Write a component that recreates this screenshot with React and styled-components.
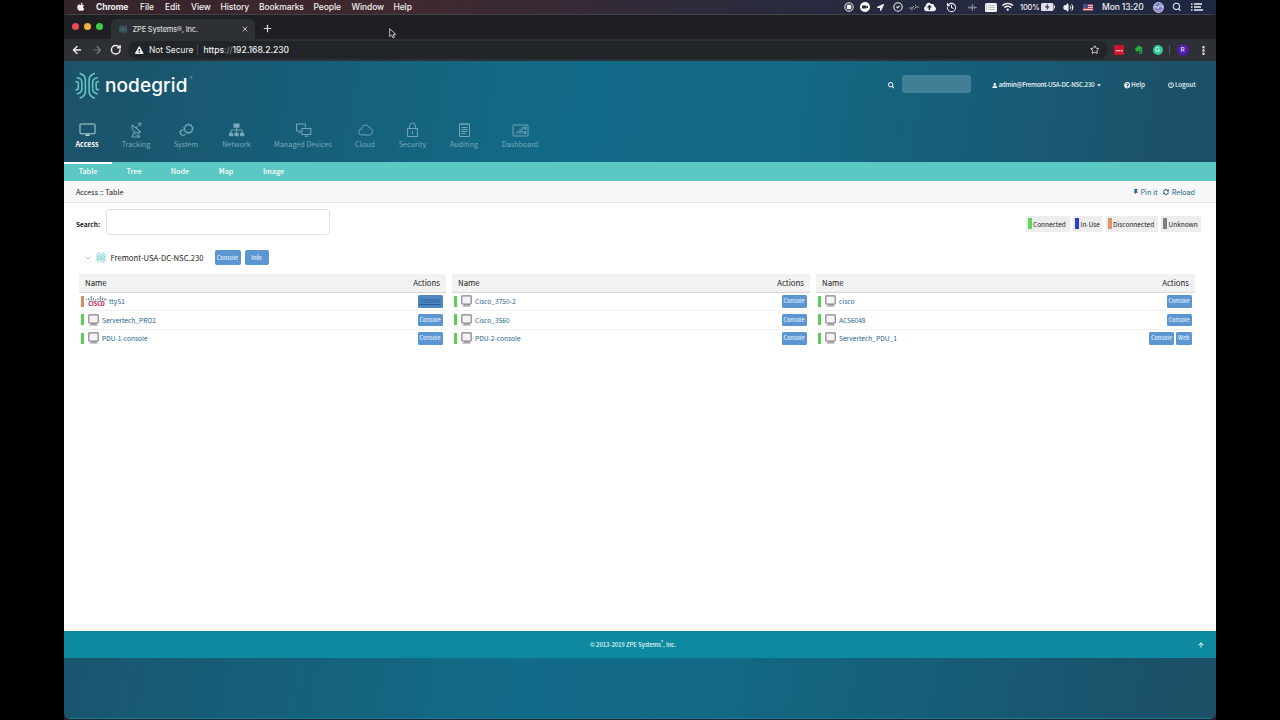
import React from "react";
import styled, { createGlobalStyle } from "styled-components";
import {
  FaApple,
  FaWifi,
  FaSearch,
  FaUser,
  FaQuestionCircle,
  FaPowerOff,
  FaCaretDown,
  FaArrowUp,
  FaThumbtack,
  FaSyncAlt,
  FaCloudUploadAlt,
  FaLocationArrow,
  FaEvernote,
  FaExclamationTriangle,
} from "react-icons/fa";
import {
  ArrowLeft,
  ArrowRight,
  RotateCw,
  X,
  Plus,
  Star,
  EllipsisVertical,
  Volume2,
  CircleCheck,
  History,
  Search,
  ChevronDown,
} from "lucide-react";

const menus = [
  ["File", 25],
  ["Edit", 26],
  ["View", 29.5],
  ["History", 38.5],
  ["Bookmarks", 54.5],
  ["People", 38],
  ["Window", 42],
  ["Help", 30],
];

const navItems = [
  ["Access", 46],
  ["Tracking", 52],
  ["System", 48],
  ["Network", 53],
  ["Managed Devices", 80],
  ["Cloud", 44],
  ["Security", 51],
  ["Auditing", 52],
  ["Dashboard", 60],
];

const subItems = [
  ["Table", 48],
  ["Tree", 44],
  ["Node", 48],
  ["Map", 44],
  ["Image", 51],
];

const legend = [
  ["Connected", "#5fd35a", 44],
  ["In-Use", "#2c3fd0", 29],
  ["Disconnected", "#dc9468", 52],
  ["Unknown", "#808080", 40],
];

const columns = [
  {
    width: 367,
    rows: [
      { name: "ttyS1", cisco: true, off: true, actions: ["Console"], pressed: true },
      { name: "Servertech_PRO2", actions: ["Console"] },
      { name: "PDU-1-console", actions: ["Console"] },
    ],
  },
  {
    width: 358,
    rows: [
      { name: "Cisco_3750-2", actions: ["Console"] },
      { name: "Cisco_3560", actions: ["Console"] },
      { name: "PDU-2-console", actions: ["Console"] },
    ],
  },
  {
    width: 379,
    rows: [
      { name: "cisco", actions: ["Console"] },
      { name: "ACS6048", actions: ["Console"] },
      { name: "Servertech_PDU_1", actions: ["Console", "Web"] },
    ],
  },
];

const NodegridMark = ({ size, color = "#62c6c6", weight = 1.6 }) => (
  <svg
    width={size}
    height={(size * 28) / 25}
    viewBox="0 0 25 28"
    fill="none"
    stroke={color}
    strokeWidth={weight}
    strokeLinecap="round"
    strokeLinejoin="round"
  >
    <path d="M1 10h1.200q1.200 0 1.200 1.200v5.600q0 1.200-1.200 1.200H1" />
    <path d="M2.300 5.800q4.700.8 4.700 5v6.400q0 4.200-4.700 5" />
    <path d="M5.300 1.500l2.500 1.300q2.800 1.800 2.800 5.200v12q0 3.400-2.800 5.200l-2.500 1.300" />
    <path d="M24 10h-1.200q-1.200 0-1.200 1.200v5.600q0 1.200 1.200 1.200H24" />
    <path d="M22.700 5.800q-4.700.8-4.700 5v6.400q0 4.200 4.700 5" />
    <path d="M19.700 1.500l-2.500 1.300q-2.800 1.800-2.800 5.200v12q0 3.400 2.800 5.200l2.500 1.300" />
  </svg>
);

const navDrawings = {
  Access: (
    <>
      <rect x="1" y="2" width="15" height="9.800" rx="0.800" />
      <path d="M6.500 13.200h4" strokeWidth="1.600" />
    </>
  ),
  Tracking: (
    <>
      <path d="M4 3c-1 5 3 9 9 7zM4 3l9 7M8 6l4-4M10 1.500l3-.5-.5 3" />
      <path d="M6 10l-2 5h8l-2-4M6 11l5 4" />
    </>
  ),
  System: (
    <>
      <circle cx="10.500" cy="6.800" r="3.900" strokeWidth="1.200" />
      <circle cx="10.500" cy="6.800" r="4.900" strokeDasharray="1.500 1.580" />
      <path d="M5.400 7.800a2.700 2.700 0 1 0 1.900 4.200" strokeWidth="1.200" />
      <path d="M4 7.200V8M1.200 9.500l.8.400M1.800 13l.6-.7M5 14.200v-.8" />
    </>
  ),
  Network: (
    <g fill="currentColor">
      <rect x="5.500" y="1.500" width="6" height="4.200" stroke="none" />
      <rect x="1" y="10.800" width="4.200" height="3.400" stroke="none" />
      <rect x="6.500" y="10.800" width="4.200" height="3.400" stroke="none" />
      <rect x="12" y="10.800" width="4.200" height="3.400" stroke="none" />
      <path fill="none" d="M8.600 5v6M3 11V8h11.200v3" />
    </g>
  ),
  "Managed Devices": (
    <>
      <path d="M6 9H1.500V2h8.800v3.500M3.500 10.800h2.300" />
      <rect x="7" y="6.500" width="8.800" height="6" />
      <path d="M9.500 14.200h3.800" />
    </>
  ),
  Cloud: <path d="M5 13a3 3 0 0 1-.5-6c.3-5 7-5 7.700-1.200 4.500.2 4.300 7.200 0 7.200z" />,
  Security: (
    <>
      <rect x="3.600" y="6.500" width="9.800" height="8" />
      <path d="M5.600 6.500V4a2.900 2.900 0 0 1 5.800 0v2.500M8.500 9.300v3M7.700 9.500h.8" />
    </>
  ),
  Auditing: (
    <>
      <rect x="3.500" y="2" width="10" height="12.500" rx="0.500" />
      <path d="M5 1v2M7.300 1v2M9.700 1v2M12 1v2M5.500 5.500h6M5.500 7.500h6M5.500 9.500h6M5.500 11.500h4" />
    </>
  ),
  Dashboard: (
    <>
      <rect x="1" y="3" width="15" height="11" rx="0.800" />
      <path d="M4 11.500V10M6 11.500V8.500M8 11.500V7M10 11.500V5M12 5h2v2h-2zM12 9.500h2v2h-2z" />
    </>
  ),
};

const NavIcon = ({ name }) => (
  <svg width="17" height="16" viewBox="0 0 17 16" fill="none" stroke="currentColor" strokeWidth="0.950">
    {navDrawings[name]}
  </svg>
);

const DeviceIcon = () => (
  <svg width="11" height="12" viewBox="0 0 11 12" fill="none">
    <rect x="0.800" y="0.800" width="9.400" height="8.200" rx="0.500" fill="#f4f4f6" stroke="#85838a" strokeWidth="1.200" />
    <path d="M2.500 10h6.500" stroke="#77757b" strokeWidth="1.200" />
    <path d="M1.200 11.300h8.600" stroke="#a9a7ac" strokeWidth="0.800" />
  </svg>
);

const CiscoLogo = () => (
  <CiscoBox>
    <svg width="21" height="5" viewBox="0 0 21 5" stroke="#4d7189" strokeWidth="0.900">
      <path d="M.5 3v1M2.800 2v2.500M5.100 0v5M7.400 2v2.500M9.700 3v1.500M12 2v2.500M14.300 0v5M16.600 1.500v3M18.800 2.500v2M20.600 3v1" />
    </svg>
    <CiscoName>CISCO</CiscoName>
  </CiscoBox>
);

const MenuBar = () => (
  <MacBar>
    <AppleSlot>
      <FaApple size={9.5} />
    </AppleSlot>
    <MenuLabel $w={44} $bold>
      Chrome
    </MenuLabel>
    {menus.map(([label, w]) => (
      <MenuLabel key={label} $w={w}>
        {label}
      </MenuLabel>
    ))}
    <Tray>
      <TraySlot $w={16}>
        <svg width="10" height="10" viewBox="0 0 10 10" fill="none" stroke="currentColor">
          <circle cx="5" cy="5" r="4.200" />
          <rect x="2.700" y="2.700" width="4.600" height="4.600" rx="1.200" fill="currentColor" stroke="none" />
        </svg>
      </TraySlot>
      <TraySlot $w={16}>
        <svg width="10" height="10" viewBox="0 0 10 10">
          <circle cx="5" cy="5" r="5" fill="#fff" />
          <path d="M2 3.500h4.200v1l1.800-.8v2.600l-1.800-.8v1H2z" fill="#28293b" />
        </svg>
      </TraySlot>
      <TraySlot $w={14}>
        <FaLocationArrow size={7} />
      </TraySlot>
      <TraySlot $w={22}>
        <CircleCheck size={10} strokeWidth={2.600} />
      </TraySlot>
      <TraySlot $w={10} $dim>
        <svg width="10" height="7" viewBox="0 0 10 7" fill="none" stroke="currentColor">
          <path d="M0 4h3l2-2M5 5l2-2h3M2 6l2-1M7 1L6 2" />
        </svg>
      </TraySlot>
      <TraySlot $w={22}>
        <FaCloudUploadAlt size={12} />
      </TraySlot>
      <TraySlot $w={20}>
        <History size={11} strokeWidth={2.200} />
      </TraySlot>
      <TraySlot $w={22} $dim>
        <svg width="9" height="9" viewBox="0 0 9 9" stroke="#b8bbcc" strokeWidth="1.200">
          <path d="M1 3.500v2M3.200 3v3M4.500 1v7M6.500 3v3M0 4.500h9" />
        </svg>
      </TraySlot>
      <TraySlot $w={15}>
        <svg width="12" height="9" viewBox="0 0 12 9">
          <rect width="12" height="9" rx="1.500" fill="#f2f2f5" />
          <path d="M1.500 2v5M3.500 2.500h6.500M3.500 4.500h6.500M3.500 6.500h6.500" stroke="#8a8b97" strokeWidth="0.500" />
        </svg>
      </TraySlot>
      <TraySlot $w={20}>
        <FaWifi size={11.5} />
      </TraySlot>
      <Percent>100%</Percent>
      <TraySlot $w={16}>
        <svg width="14" height="8" viewBox="0 0 14 8">
          <rect width="12.500" height="8" rx="1.500" fill="#dfe0e6" />
          <rect x="13" y="2.500" width="1" height="3" fill="#dfe0e6" />
          <path d="M7 0.500L4 4.500h2.200L5.500 7.500l3-4H6.400z" fill="#27293b" />
        </svg>
      </TraySlot>
      <TraySlot $w={24}>
        <Volume2 size={11} fill="currentColor" strokeWidth={2} />
      </TraySlot>
      <TraySlot $w={16}>
        <svg width="10" height="7" viewBox="0 0 10 7">
          <rect width="10" height="7" fill="#d9c4cc" />
          <path d="M0 .5h10M0 2.500h10M0 4.500h10M0 6.500h10" stroke="#bd4a5c" />
          <rect width="5" height="4" fill="#465184" />
        </svg>
      </TraySlot>
      <Clock>Mon 13:20</Clock>
      <TraySlot $w={18}>
        <svg width="11" height="11" viewBox="0 0 11 11">
          <circle cx="5.500" cy="5.500" r="5" fill="#7d83c9" stroke="#c8cbe0" />
          <path d="M1.500 5.500c2-4 3 3 4 0s3-2 4 0" stroke="#fff" fill="none" />
          <path d="M3 8c2 1.500 4 1 5-.5" stroke="#e886bd" fill="none" />
        </svg>
      </TraySlot>
      <TraySlot $w={20}>
        <Search size={9.5} strokeWidth={2.600} />
      </TraySlot>
      <TraySlot $w={20}>
        <svg width="12" height="8" viewBox="0 0 12 8" stroke="currentColor" strokeWidth="1.300">
          <path d="M0 1h1.500M3 1h8M0 4h1.500M3 4h7M0 7h1.500M3 7h9" />
        </svg>
      </TraySlot>
    </Tray>
  </MacBar>
);

const Browser = () => (
  <>
    <TabStrip>
      <Lights>
        <Light $color="#ee4b50" />
        <Light $color="#f3b13e" />
        <Light $color="#3ccb4e" />
      </Lights>
      <Tab>
        <NodegridMark size={8} color="#4d8f92" weight={2} />
        <TabTitle>ZPE Systems®, Inc.</TabTitle>
        <X size={8} strokeWidth={2.500} />
      </Tab>
      <NewTab>
        <Plus size={11} strokeWidth={2.600} />
      </NewTab>
    </TabStrip>
    <AddressBar>
      <ArrowLeft size={12} strokeWidth={2.700} />
      <ArrowRight size={12} strokeWidth={2.400} color="#777a7e" />
      <RotateCw size={11.5} strokeWidth={3} />
      <UrlField>
        <FaExclamationTriangle size={8.5} />
        <NotSecure>Not Secure</NotSecure>
        <Url>
          <b>https</b>
          <span>://</span>
          <b>192.168.2.230</b>
        </Url>
        <Star size={9.5} strokeWidth={2.200} />
      </UrlField>
      <Extensions>
        <RedBadge>•••</RedBadge>
        <FaEvernote size={9.5} color="#23ad3f" />
        <RoundBadge $color="#2ec99b">G</RoundBadge>
        <ExtDivider />
        <RoundBadge $color="#4b1fa6" $big>
          R
        </RoundBadge>
        <EllipsisVertical size={11} strokeWidth={3.400} />
      </Extensions>
    </AddressBar>
  </>
);

const AppHeader = () => (
  <HeaderArea>
    <BrandRow>
      <NodegridMark size={24.5} />
      <Wordmark>nodegrid</Wordmark>
      <Registered>®</Registered>
      <HeaderTools>
        <FaSearch size={6.5} />
        <HeaderSearch />
        <Tool $w={131.5}>
          <FaUser size={5.500} />
          <ToolText $gap={1} $squeeze={-0.32}>
            admin@Fremont-USA-DC-NSC.230
          </ToolText>
          <FaCaretDown size={6} />
        </Tool>
        <Tool $w={44.5}>
          <FaQuestionCircle size={6.5} />
          <ToolText $gap={1} $squeeze={-0.1}>
            Help
          </ToolText>
        </Tool>
        <Tool $w={27}>
          <FaPowerOff size={6} />
          <ToolText $gap={1} $squeeze={-0.15}>
            Logout
          </ToolText>
        </Tool>
      </HeaderTools>
    </BrandRow>
    <MainNav>
      {navItems.map(([label, w], i) => (
        <NavItem key={label} $w={w} $active={i === 0}>
          <NavIcon name={label} />
          <NavText>{label}</NavText>
        </NavItem>
      ))}
    </MainNav>
  </HeaderArea>
);

const DeviceTable = ({ width, rows }) => (
  <Table $w={width}>
    <TableHead>
      <span>Name</span>
      <span>Actions</span>
    </TableHead>
    {rows.map((row) => (
      <Row key={row.name}>
        <Status $color={row.off ? "#d38d62" : "#57cf54"} />
        {row.cisco ? <CiscoLogo /> : <DeviceIcon />}
        <DeviceName>{row.name}</DeviceName>
        <Actions>
          {row.actions.map((action) => (
            <ActionButton key={action} $w={action === "Web" ? 15.5 : 25} $pressed={row.pressed}>
              {action}
            </ActionButton>
          ))}
        </Actions>
      </Row>
    ))}
  </Table>
);

const App = () => (
  <>
    <GlobalStyle />
    <Stage>
      <Screen>
        <MenuBar />
        <Window>
          <Browser />
          <Page>
            <AppHeader />
            <SubNav>
              {subItems.map(([label, w], i) => (
                <SubItem key={label} $w={w} $active={i === 0}>
                  {label}
                </SubItem>
              ))}
            </SubNav>
            <Breadcrumb>
              <span>Access :: Table</span>
              <PageLinks>
                <FaThumbtack size={5.500} />
                <span>Pin it</span>
                <FaSyncAlt size={6} />
                <span>Reload</span>
              </PageLinks>
            </Breadcrumb>
            <Content>
              <FilterRow>
                <SearchLabel>Search:</SearchLabel>
                <SearchInput />
                <Legend>
                  {legend.map(([label, color, w]) => (
                    <LegendItem key={label} $w={w} $color={color}>
                      {label}
                    </LegendItem>
                  ))}
                </Legend>
              </FilterRow>
              <HostRow>
                <ChevronDown size={8} color="#999" strokeWidth={2} />
                <NodegridMark size={10} color="#5cc3c2" weight={1.9} />
                <HostName>Fremont-USA-DC-NSC.230</HostName>
                <HostButton $w={26}>Console</HostButton>
                <HostButton $w={24}>Info</HostButton>
              </HostRow>
              <Tables>
                {columns.map((col) => (
                  <DeviceTable key={col.width} {...col} />
                ))}
              </Tables>
            </Content>
            <Footer>
              <Copyright>
                © 2013-2019 ZPE Systems<sup>®</sup>, Inc.
              </Copyright>
              <FaArrowUp size={6} />
            </Footer>
          </Page>
        </Window>
      </Screen>
      <Pointer width="8" height="11" viewBox="0 0 8 11">
        <path d="M.7 .7v8l2-1.800 1.300 3 1.500-.7-1.300-2.800h2.600z" fill="#17181c" stroke="#d8d8da" strokeWidth="0.900" />
      </Pointer>
    </Stage>
  </>
);

export default App;

const GlobalStyle = createGlobalStyle`
  * {
    box-sizing: border-box;
  }
  body {
    margin: 0;
    background: #000;
  }
  svg {
    display: block;
    flex: none;
  }
`;

const Stage = styled.div`
  position: relative;
  width: 1280px;
  height: 720px;
  padding: 0 64px;
  background: #000;
  overflow: hidden;
`;

const Screen = styled.div`
  width: 1152px;
  height: 720px;
  background: #262430;
  font-family: Inter, "Liberation Sans", sans-serif;
`;

const Pointer = styled.svg`
  position: absolute;
  left: 389px;
  top: 28px;
`;

const MacBar = styled.div`
  display: flex;
  align-items: center;
  height: 14px;
  background: linear-gradient(90deg, #34242a, #40292f 30%, #292b3e 62%, #1e2743);
  color: #f1f0f3;
`;

const AppleSlot = styled.div`
  width: 32px;
  padding: 0 0 1px 12px;
`;

const MenuLabel = styled.span`
  width: ${({ $w }) => $w}px;
  font-size: 8.500px;
  line-height: 13px;
  font-weight: ${({ $bold }) => ($bold ? 700 : 500)};
  letter-spacing: -0.1px;
  white-space: nowrap;
`;

const Tray = styled.div`
  display: flex;
  align-items: center;
  margin-left: auto;
  margin-right: 9px;
`;

const TraySlot = styled.div`
  display: flex;
  flex: none;
  justify-content: center;
  width: ${({ $w }) => $w}px;
  opacity: ${({ $dim }) => ($dim ? 0.6 : 1)};
`;

const Percent = styled.span`
  width: 22px;
  padding-left: 2px;
  font-size: 7.500px;
  font-weight: 500;
  letter-spacing: -0.2px;
`;

const Clock = styled.span`
  width: 53px;
  padding-left: 6px;
  font-size: 8.500px;
  font-weight: 500;
  letter-spacing: -0.1px;
  white-space: nowrap;
`;

const Window = styled.div`
  display: flex;
  flex-direction: column;
  height: 705px;
  border-radius: 4px 4px 6px 6px;
  overflow: hidden;
`;

const TabStrip = styled.div`
  display: flex;
  align-items: flex-end;
  height: 25px;
  background: #1d1f23;
  border-top: 1px solid #42434a;
`;

const Lights = styled.div`
  display: flex;
  gap: 5px;
  width: 47px;
  padding-left: 8px;
  padding-bottom: 9px;
`;

const Light = styled.i`
  width: 7px;
  height: 7px;
  border-radius: 50%;
  background: ${({ $color }) => $color};
`;

const Tab = styled.div`
  display: flex;
  align-items: center;
  width: 144px;
  height: 20px;
  padding: 0 6px 0 8px;
  border-radius: 5px 5px 0 0;
  background: #2d3035;
  color: #d9dadc;
`;

const TabTitle = styled.span`
  flex: 1;
  margin-left: 5.500px;
  font-size: 7.400px;
  font-weight: 500;
  letter-spacing: -0.15px;
`;

const NewTab = styled.div`
  padding: 0 0 5px 7px;
  color: #dcdde0;
`;

const AddressBar = styled.div`
  display: flex;
  align-items: center;
  gap: 7.500px;
  height: 22px;
  padding: 0 7px;
  background: #2d3035;
  color: #f0f0f2;
`;

const UrlField = styled.div`
  display: flex;
  flex: 1;
  align-items: center;
  height: 18px;
  margin-left: -1px;
  padding: 0 8px 0 7px;
  border-radius: 9px;
  background: #212428;
`;

const NotSecure = styled.span`
  width: 48.500px;
  margin-left: 5.500px;
  border-right: 1px solid #45484c;
  font-size: 8.400px;
  line-height: 10px;
  white-space: nowrap;
`;

const Url = styled.span`
  flex: 1;
  margin-left: 6px;
  font-size: 8.500px;

  b {
    font-weight: 500;
  }
  span {
    color: #9a9da1;
  }
`;

const Extensions = styled.div`
  display: flex;
  align-items: center;
  gap: 9.500px;
  margin-left: -1px;
`;

const RedBadge = styled.span`
  width: 10px;
  height: 10px;
  border-radius: 1px;
  background: #c9162b;
  color: #fff;
  font-size: 5px;
  line-height: 10px;
  text-align: center;
  letter-spacing: -0.5px;
`;

const RoundBadge = styled.span`
  width: ${({ $big }) => ($big ? 12 : 10)}px;
  height: ${({ $big }) => ($big ? 12 : 10)}px;
  border-radius: 50%;
  background: ${({ $color }) => $color};
  color: #fff;
  font-size: 6.500px;
  line-height: ${({ $big }) => ($big ? 12 : 10)}px;
  text-align: center;
`;

const ExtDivider = styled.span`
  width: 1px;
  height: 10px;
  margin: 0 -3px;
  background: #54575b;
`;

const Page = styled.div`
  display: flex;
  flex: 1;
  flex-direction: column;
  background: linear-gradient(100deg, #1b5067 0%, #126b88 44%, #126a87 58%, #1b5067 97%);
  border-bottom: 1px solid #147a95;
  font-family: "Noto Sans CJK SC", "Noto Sans", sans-serif;
`;

const HeaderArea = styled.header`
  height: 101px;
  background: linear-gradient(100deg, #1b5269 0%, #126b88 44%, #126a87 60%, #1c5068 97%);
`;

const BrandRow = styled.div`
  display: flex;
  align-items: center;
  height: 49px;
  padding: 1px 21px 0 11px;
`;

const Wordmark = styled.span`
  margin: -1px 0 0 5.500px;
  color: #fff;
  font-family: Inter, sans-serif;
  font-size: 19px;
  font-weight: 500;
  line-height: 24px;
  letter-spacing: 0.1px;
`;

const Registered = styled.span`
  margin: -16px 0 0 2px;
  color: #84b1c1;
  font-size: 6.500px;
  line-height: 8px;
`;

const HeaderTools = styled.div`
  display: flex;
  align-items: center;
  margin-left: auto;
  padding-bottom: 1.500px;
  color: #e9f3f6;
`;

const HeaderSearch = styled.div`
  width: 69px;
  height: 18px;
  margin: -2px 21px 0 8px;
  border-radius: 3px;
  background: #427f96;
`;

const Tool = styled.div`
  display: flex;
  align-items: center;
  width: ${({ $w }) => $w}px;
`;

const ToolText = styled.span`
  margin: 0 2px 0 ${({ $gap }) => $gap}px;
  font-size: 6.400px;
  font-weight: 500;
  line-height: 10px;
  letter-spacing: ${({ $squeeze }) => $squeeze || 0}px;
`;

const MainNav = styled.nav`
  display: flex;
  height: 52px;
  padding-top: 12px;
`;

const NavItem = styled.div`
  display: flex;
  flex-direction: column;
  align-items: center;
  width: ${({ $w }) => $w}px;
  color: ${({ $active }) => ($active ? "#fff" : "#79a9bb")};
  font-weight: ${({ $active }) => ($active ? 700 : 400)};

  svg {
    color: ${({ $active }) => ($active ? "#b9dfe4" : "#79a9bb")};
  }
`;

const NavText = styled.span`
  font-size: 7.200px;
  line-height: 13px;
  white-space: nowrap;
`;

const SubNav = styled.nav`
  display: flex;
  height: 19px;
  background: #5bc8c3;
`;

const SubItem = styled.span`
  width: ${({ $w }) => $w}px;
  border-top: 2px solid ${({ $active }) => ($active ? "#fff" : "transparent")};
  color: #fff;
  font-size: 7.200px;
  font-weight: 500;
  line-height: 15px;
  text-align: center;
`;

const Breadcrumb = styled.div`
  display: flex;
  align-items: center;
  justify-content: space-between;
  height: 22px;
  padding: 0 21px 0 12px;
  border-bottom: 1px solid #e2e2e2;
  background: #f7f7f7;
  color: #222;
  font-size: 7.200px;
`;

const PageLinks = styled.div`
  display: flex;
  align-items: center;
  gap: 2.500px;
  color: #1a5f85;
  font-size: 7.200px;

  svg:nth-of-type(2) {
    margin-left: 3px;
  }
`;

const Content = styled.main`
  flex: 1;
  background: #fff;
`;

const FilterRow = styled.div`
  display: flex;
  align-items: center;
  height: 38px;
  padding: 0 15px 0 12px;
`;

const SearchLabel = styled.span`
  width: 30px;
  padding-top: 3px;
  color: #111;
  font-size: 6.500px;
  font-weight: 700;
  line-height: 10px;
`;

const SearchInput = styled.div`
  width: 224px;
  height: 26px;
  border: 1px solid #e0e0e0;
  border-radius: 3px;
`;

const Legend = styled.div`
  display: flex;
  gap: 3.500px;
  margin-left: auto;
  padding-top: 3px;
`;

const LegendItem = styled.span`
  display: flex;
  align-items: center;
  width: ${({ $w }) => $w}px;
  height: 16px;
  padding-left: 2px;
  background: #ededed;
  color: #222;
  font-size: 6.500px;
  white-space: nowrap;

  &::before {
    content: "";
    width: 4px;
    height: 11px;
    margin-right: 1.500px;
    background: ${({ $color }) => $color};
  }
`;

const HostRow = styled.div`
  display: flex;
  align-items: center;
  height: 33px;
  padding-left: 20px;

  svg + svg {
    margin-left: 4px;
  }
`;

const HostName = styled.span`
  width: 104px;
  margin-left: 4.500px;
  padding-bottom: 1px;
  color: #222;
  font-size: 7.700px;
  white-space: nowrap;
`;

const HostButton = styled.button`
  width: ${({ $w }) => $w}px;
  height: 15px;
  margin-right: 4px;
  padding: 0;
  border: 0;
  border-radius: 2px;
  background: #5b96d2;
  color: #e4effa;
  font-family: inherit;
  font-size: 5.600px;
  font-weight: 500;
`;

const Tables = styled.div`
  display: flex;
  gap: 6px;
  padding-left: 15px;
`;

const Table = styled.section`
  width: ${({ $w }) => $w}px;
`;

const TableHead = styled.div`
  display: flex;
  align-items: center;
  justify-content: space-between;
  height: 18.500px;
  padding: 0 6px;
  border-bottom: 1px solid #d8d8d8;
  background: #f2f2f2;
  color: #222;
  font-size: 7.800px;
  line-height: 12px;
`;

const Row = styled.div`
  display: flex;
  align-items: center;
  height: 18.600px;
  padding: 0 3.500px 0 2px;
  border-bottom: 1px solid #f0f0f0;

  &:last-child {
    border-bottom-color: transparent;
  }
`;

const Status = styled.i`
  width: 3px;
  height: 11px;
  margin-right: 4px;
  background: ${({ $color }) => $color};
`;

const CiscoBox = styled.span`
  display: flex;
  flex-direction: column;
  align-items: center;
  width: 21px;
  margin: 0 -1px 0 -2px;
`;

const CiscoName = styled.span`
  color: #bd2553;
  font-size: 5.400px;
  font-weight: 900;
  line-height: 6px;
`;

const DeviceName = styled.span`
  flex: 1;
  margin-left: 3px;
  color: #1c638c;
  font-size: 6.600px;
`;

const Actions = styled.div`
  display: flex;
  gap: 2px;
`;

const ActionButton = styled.button`
  width: ${({ $w }) => $w}px;
  height: 12.500px;
  padding: 0;
  border: 0;
  border-radius: 1.500px;
  background: ${({ $pressed }) => ($pressed ? "#5087c3" : "#5b96d2")};
  color: ${({ $pressed }) => ($pressed ? "#245f9b" : "#e4effa")};
  font-family: inherit;
  font-size: 5.500px;
  font-weight: 500;
  text-decoration: ${({ $pressed }) => ($pressed ? "underline" : "none")};
`;

const Footer = styled.footer`
  display: flex;
  align-items: center;
  height: 27px;
  margin-bottom: 60px;
  padding-right: 12px;
  background: #0d8a9f;
  color: #e7f6f8;
`;

const Copyright = styled.span`
  flex: 1;
  padding-left: 4px;
  font-size: 5.900px;
  font-weight: 500;
  line-height: 10px;
  text-align: center;
  letter-spacing: -0.05px;

  sup {
    font-size: 4px;
    line-height: 0;
  }
`;
